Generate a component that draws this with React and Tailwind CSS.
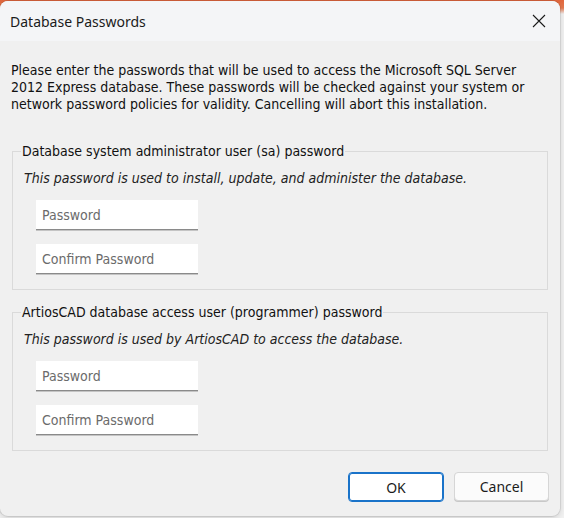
export default function App() {
  return (
    <div className="h-[518px] w-[564px] overflow-hidden bg-[linear-gradient(to_bottom,#e0653c_0px,#e4794f_8px,#f2f2f2_14px,#f2f2f2_100%)]">
      <div className="mt-px flex h-[515px] w-[560px] flex-col overflow-hidden rounded-lg bg-[#f0f0f0] shadow-[0_0_0_1px_rgba(0,0,0,0.08),0_2px_6px_rgba(0,0,0,0.15)]">
        {/* Title bar */}
        <div className="flex h-[40px] shrink-0 items-center justify-between bg-[#f4f5f7] pl-[10px] pr-[14px]">
          <span className="text-[14px] text-[#1b1b1b] [font-family:'Noto_Sans',sans-serif]">
            Database Passwords
          </span>
          <svg width="14" height="14" viewBox="0 0 14 14" className="text-[#1b1b1b]">
            <path d="M1 1 L13 13 M13 1 L1 13" stroke="currentColor" strokeWidth="1.1" fill="none" />
          </svg>
        </div>

        {/* Body */}
        <div className="flex flex-1 flex-col px-[11px] pt-[21px] text-[14px] leading-[17px] text-[#111] [font-family:'DejaVu_Sans_Condensed','DejaVu_Sans',sans-serif]">
          <p>
            Please enter the passwords that will be used to access the Microsoft SQL Server
            2012 Express database. These passwords will be checked against your system or
            network password policies for validity. Cancelling will abort this installation.
          </p>

          <Group
            className="mt-[30px]"
            title="Database system administrator user (sa) password"
            note="This password is used to install, update, and administer the database."
          />
          <Group
            className="mt-[14px]"
            title="ArtiosCAD database access user (programmer) password"
            note="This password is used by ArtiosCAD to access the database."
          />

          <div className="mt-[21px] flex justify-end gap-[10px] text-[14px] [font-family:'Noto_Sans',sans-serif]">
            <button className="h-[30px] w-[96px] rounded-[4px] border border-[#1a73c9] bg-white text-[#1b1b1b] shadow-[inset_0_0_0_1px_#1a73c9]">
              OK
            </button>
            <button className="h-[29px] w-[95px] rounded-[4px] border border-[#d6d6d6] bg-[#fbfbfb] text-[#1b1b1b] shadow-[0_1px_0_#c8c8c8]">
              Cancel
            </button>
          </div>
        </div>
      </div>
    </div>
  );
}

function Group({ title, note, className }) {
  return (
    <fieldset className={`mx-px h-[147px] border border-[#dadada] px-0 ${className}`}>
      <legend className="ml-[8px] px-[1px] text-[#111]">{title}</legend>
      <p className="mt-[10px] pl-[11px] italic text-[#222]">{note}</p>
      <div className="mt-[13px] ml-[23px] flex flex-col gap-[14px]">
        <Field placeholder="Password" />
        <Field placeholder="Confirm Password" />
      </div>
    </fieldset>
  );
}

function Field({ placeholder }) {
  return (
    <input
      type="password"
      placeholder={placeholder}
      className="h-[30px] w-[162px] border-b border-[#8a8a8a] bg-white px-[6px] text-[14px] text-[#111] shadow-[0_1px_0_#c4c4c4] outline-none placeholder:text-[#6b6b6b]"
    />
  );
}
